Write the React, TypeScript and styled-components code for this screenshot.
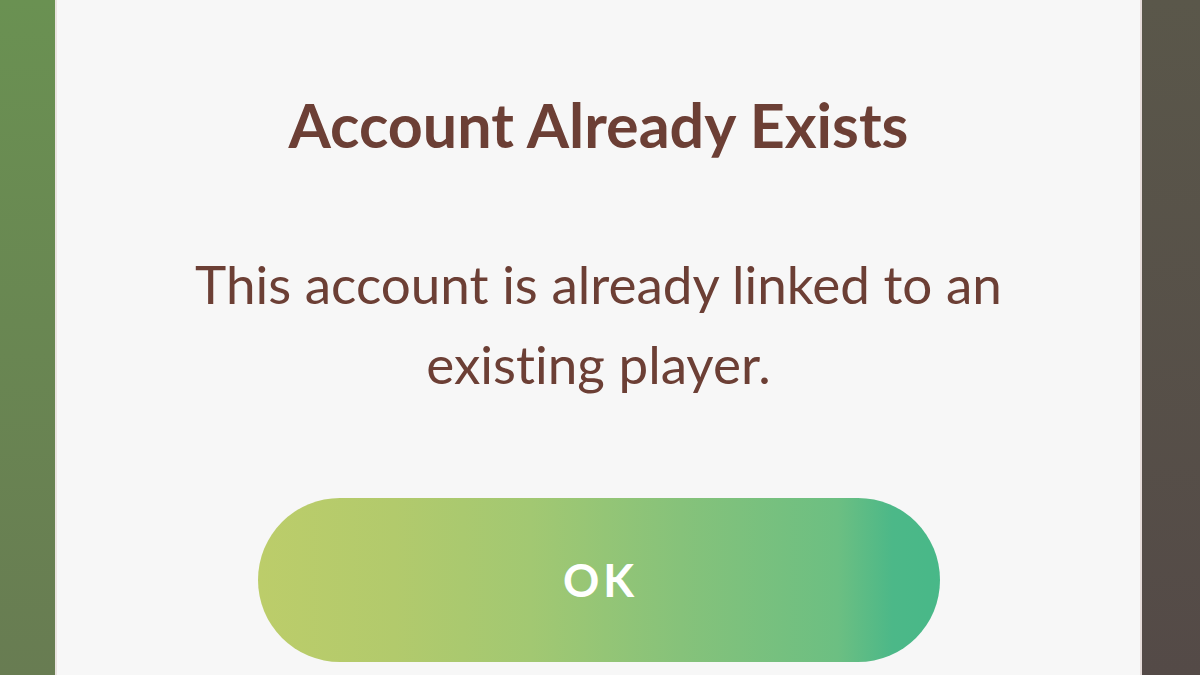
import React from 'react';
import styled, { createGlobalStyle } from 'styled-components';

const GlobalStyle = createGlobalStyle`
  html, body {
    margin: 0;
    padding: 0;
    width: 100%;
    height: 100%;
    overflow: hidden;
  }
  #root {
    height: 100%;
  }
`;

const Backdrop = styled.div`
  display: flex;
  height: 675px;
  width: 1200px;
  font-family: Lato, 'Noto Sans', sans-serif;
  font-variant-ligatures: none;
`;

const Side = styled.div<{ $width: number; $from: string; $to: string }>`
  flex: 0 0 ${(p) => p.$width}px;
  background: linear-gradient(180deg, ${(p) => p.$from}, ${(p) => p.$to});
`;

const Card = styled.section`
  flex: 1;
  display: flex;
  flex-direction: column;
  align-items: center;
  background: #f7f7f7;
  border-left: 2px solid #e9e3e0;
  border-right: 2px solid #e6dcda;
  padding-top: 90px;
`;

const Title = styled.h1`
  margin: 0;
  font-weight: 700;
  font-size: 61px;
  line-height: 70px;
  color: #6c3f35;
`;

const Message = styled.p`
  margin: 84px 0 0;
  font-weight: 400;
  font-size: 53px;
  line-height: 80px;
  text-align: center;
  color: #6c3f35;
  max-width: 900px;
`;

const OkButton = styled.button`
  margin-top: 94px;
  width: 682px;
  height: 164px;
  border: none;
  border-radius: 82px;
  background: linear-gradient(90deg, #bccd6a 0%, #b2ca6c 20%, #a2c872 40%, #86c27a 62%, #6cbf82 85%, #4cb888 93%, #48b888 100%);
  color: #ffffff;
  font-family: Lato, 'Noto Sans', sans-serif;
  font-weight: 700;
  font-size: 45px;
  letter-spacing: 4px;
  padding: 0 0 0 4px;
  cursor: pointer;
`;

export default function App() {
  return (
    <>
      <GlobalStyle />
      <Backdrop>
        <Side $width={55} $from="#6a9152" $to="#687c52" />
        <Card>
          <Title>Account Already Exists</Title>
          <Message>
            This account is already linked to an
            <br />
            existing player.
          </Message>
          <OkButton type="button">OK</OkButton>
        </Card>
        <Side $width={58} $from="#5a574a" $to="#544a47" />
      </Backdrop>
    </>
  );
}
